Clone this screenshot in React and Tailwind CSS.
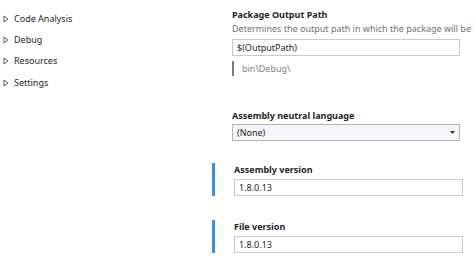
import React from 'react';

const font = { fontFamily: '"Segoe UI", "Noto Sans", "Open Sans", sans-serif' };

const Caret = () => (
  <svg width="6" height="8" viewBox="0 0 6 8" className="shrink-0">
    <path d="M1 1 L5 4 L1 7 Z" fill="none" stroke="#5a5a5a" strokeWidth="1" />
  </svg>
);

const TreeItem = ({ label }) => (
  <div className="flex items-center h-[21.3px] pl-[3px] gap-[5px]">
    <Caret />
    <span className="text-[9px] text-[#1e1e1e]">{label}</span>
  </div>
);

const Field = ({ label, value }) => (
  <div className="flex h-[33px]">
    <div className="w-[3px] shrink-0 bg-[#3d8fd1]" />
    <div className="pl-[19px]">
      <div className="text-[9px] font-bold text-[#1e1e1e] leading-[14px] mb-[2px]">{label}</div>
      <div className="w-[229px] h-[17px] border border-[#c8c8c8] bg-white flex items-center px-[4px] text-[9px] text-[#1e1e1e]">
        {value}
      </div>
    </div>
  </div>
);

export default function App() {
  return (
    <div className="w-[474px] h-[256px] bg-white overflow-hidden flex" style={font}>
      {/* Left tree */}
      <div className="w-[212px] shrink-0 pt-[8px]">
        <TreeItem label="Code Analysis" />
        <TreeItem label="Debug" />
        <TreeItem label="Resources" />
        <TreeItem label="Settings" />
      </div>

      {/* Right properties */}
      <div className="flex-1 min-w-0">
        <div className="pl-[20px] pt-[8px]">
          <div className="text-[9px] font-bold text-[#1e1e1e] leading-[14px]">Package Output Path</div>
          <div className="text-[9px] text-[#717171] leading-[14px] whitespace-nowrap mb-[3px]">
            Determines the output path in which the package will be dropped.
          </div>
          <div className="w-[228px] h-[17px] border border-[#c8c8c8] bg-white flex items-center px-[4px] text-[9px] text-[#1e1e1e]">
            $(OutputPath)
          </div>
          <div className="flex items-center mt-[5px] h-[15px]">
            <div className="w-[2px] h-full bg-[#7a7a7a]" />
            <span className="pl-[8px] text-[9px] text-[#808080]">bin\Debug\</span>
          </div>

          <div className="text-[9px] font-bold text-[#1e1e1e] leading-[14px] mt-[33px] mb-[1px]">Assembly neutral language</div>
          <div className="w-[228px] h-[17px] border border-[#b4b4b4] bg-[#f4f6fc] flex items-center justify-between px-[4px] text-[9px] text-[#1e1e1e]">
            <span>(None)</span>
            <svg width="5" height="3" viewBox="0 0 5 3"><path d="M0 0 L5 0 L2.5 3 Z" fill="#333" /></svg>
          </div>
        </div>

        <div className="mt-[22px]">
          <Field label="Assembly version" value="1.8.0.13" />
        </div>
        <div className="mt-[24px]">
          <Field label="File version" value="1.8.0.13" />
        </div>
      </div>
    </div>
  );
}
